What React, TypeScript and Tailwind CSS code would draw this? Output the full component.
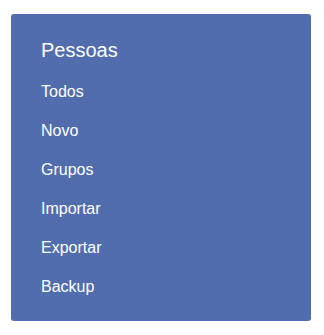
export default function App() {
  const items = ['Todos', 'Novo', 'Grupos', 'Importar', 'Exportar', 'Backup']
  return (
    <div className="w-[324px] h-[335px] bg-white pt-[14px] pl-[11px]" style={{ fontFamily: '"Liberation Sans", Arial, sans-serif' }}>
      <div className="w-[300px] h-[307px] rounded-[3px] bg-[#526dae] pt-[22px] pl-[30px] text-white">
        <h2 className="text-[20px] leading-[28px] mb-[8px]">Pessoas</h2>
        <ul>
          {items.map(i => (
            <li key={i} className="h-[39px] flex items-center text-[16px]">{i}</li>
          ))}
        </ul>
      </div>
    </div>
  )
}
